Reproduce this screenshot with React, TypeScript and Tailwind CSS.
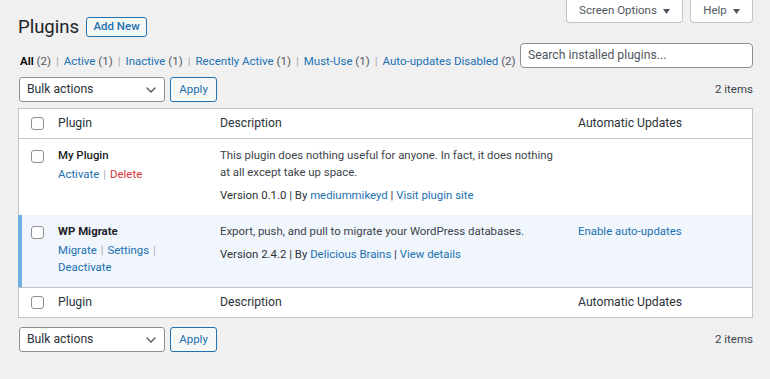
import React from "react";

const Chevron = () => (
  <svg width="10" height="6" viewBox="0 0 10 6" fill="none">
    <path d="M1 1l4 4 4-4" stroke="#50575e" strokeWidth="1.4" strokeLinecap="round" strokeLinejoin="round" />
  </svg>
);

const Tri = () => (
  <svg width="7" height="5" viewBox="0 0 7 5" className="ml-[6px]">
    <path d="M0 0h7L3.5 5z" fill="#50575e" />
  </svg>
);

const Check = () => (
  <span className="block w-[13px] h-[13px] rounded-[3px] border border-[#8c8f94] bg-white" />
);

const Sep = () => <span className="text-[#a7aaad] mx-[4px]">|</span>;
const FSep = () => <span className="text-[#a7aaad] mx-[5px]">|</span>;

function BulkRow() {
  return (
    <div className="flex items-center justify-between h-[25px]">
      <div className="flex items-center gap-[5px]">
        <div className="w-[146px] h-[25px] border border-[#8c8f94] rounded-[3px] bg-white flex items-center justify-between pl-[7px] pr-[8px] text-[12.2px] text-[#2c3338]">
          <span>Bulk actions</span>
          <Chevron />
        </div>
        <div className="w-[47px] h-[25px] border border-[#2271b1] rounded-[3px] bg-[#f6f7f7] flex items-center justify-center text-[11.5px] text-[#2271b1]">
          Apply
        </div>
      </div>
      <span className="text-[11.5px] text-[#3c434a]">2 items</span>
    </div>
  );
}

function HeadRow({ top }: { top?: boolean }) {
  return (
    <div
      className={
        "flex items-center h-[30px] text-[12.2px] text-[#2c3338] " +
        (top ? "border-b border-[#c3c4c7]" : "border-t border-[#c3c4c7]")
      }
    >
      <div className="w-[39px] pl-[12px]">
        <Check />
      </div>
      <div className="w-[162px]">Plugin</div>
      <div className="w-[358px]">Description</div>
      <div className="flex-1">Automatic Updates</div>
    </div>
  );
}

export default function App() {
  return (
    <div
      className="w-[770px] h-[379px] bg-[#f0f0f1] overflow-hidden text-[#3c434a]"
      style={{ fontFamily: "Roboto, Inter, 'Noto Sans', sans-serif" }}
    >
      <div className="flex justify-between items-start pr-[17px]">
        <div className="flex items-center pl-[18px] pt-[17px] gap-[7px]">
          <h1 className="text-[18.5px] leading-[20px] text-[#1d2327]">Plugins</h1>
          <div className="h-[20px] w-[61px] border border-[#2271b1] rounded-[3px] bg-[#f6f7f7] flex items-center justify-center text-[11.5px] font-medium text-[#2271b1]">
            Add New
          </div>
        </div>
        <div className="flex gap-[7px]">
          <div className="w-[117px] h-[23px] bg-white border border-t-0 border-[#c3c4c7] rounded-b-[4px] flex items-center justify-center text-[11.5px] text-[#50575e]">
            Screen Options
            <Tri />
          </div>
          <div className="w-[63px] h-[23px] bg-white border border-t-0 border-[#c3c4c7] rounded-b-[4px] flex items-center justify-center text-[11.5px] text-[#50575e]">
            Help
            <Tri />
          </div>
        </div>
      </div>

      <div className="flex justify-between items-start pl-[20px] pr-[17px] mt-[6px]">
        <div className="pt-[10px] text-[11.5px] leading-[16px] text-[#50575e] whitespace-nowrap">
          <span className="font-semibold text-[#000]">All</span> (2)
          <FSep />
          <span className="text-[#2271b1]">Active</span> (1)
          <FSep />
          <span className="text-[#2271b1]">Inactive</span> (1)
          <FSep />
          <span className="text-[#2271b1]">Recently Active</span> (1)
          <FSep />
          <span className="text-[#2271b1]">Must-Use</span> (1)
          <FSep />
          <span className="text-[#2271b1]">Auto-updates Disabled</span> (2)
        </div>
        <div className="w-[233px] h-[25px] border border-[#8c8f94] rounded-[4px] bg-white flex items-center pl-[7px] text-[12.2px] text-[#50575e] shrink-0">
          Search installed plugins...
        </div>
      </div>

      <div className="pl-[19px] pr-[17px] mt-[8px]">
        <BulkRow />
      </div>

      <div className="ml-[18px] mr-[17px] mt-[6px] border border-[#c3c4c7] bg-white">
        <HeadRow top />
        <div className="flex items-start h-[76px] text-[11.4px]">
          <div className="w-[39px] pl-[12px] pt-[11px]">
            <Check />
          </div>
          <div className="w-[162px] pt-[8px]">
            <div className="leading-[17px] font-medium text-[#1d2327]">My Plugin</div>
            <div className="leading-[17px] pt-[2px]">
              <span className="text-[#2271b1]">Activate</span>
              <Sep />
              <span className="text-[#d63638]">Delete</span>
            </div>
          </div>
          <div className="w-[358px] pt-[8px] pr-[18px]">
            <p className="leading-[17px]">
              This plugin does nothing useful for anyone. In fact, it does nothing at all except take up space.
            </p>
            <p className="leading-[17px] mt-[6px] text-[#2c3338]">
              Version 0.1.0 | By <span className="text-[#2271b1]">mediummikeyd</span> |{" "}
              <span className="text-[#2271b1]">Visit plugin site</span>
            </p>
          </div>
          <div className="flex-1" />
        </div>
        <div className="flex items-start h-[72px] text-[11.4px] bg-[#f0f6fc] border-l-[4px] border-[#72aee6] ml-[-1px]">
          <div className="w-[36px] pl-[9px] pt-[11px]">
            <Check />
          </div>
          <div className="w-[162px] pt-[8px]">
            <div className="leading-[17px] font-bold text-[#1d2327]">WP Migrate</div>
            <div className="leading-[16.5px] pt-[2px]">
              <span className="text-[#2271b1]">Migrate</span>
              <Sep />
              <span className="text-[#2271b1]">Settings</span>
              <Sep />
              <br />
              <span className="text-[#2271b1]">Deactivate</span>
            </div>
          </div>
          <div className="w-[358px] pt-[8px] pr-[18px]">
            <p className="leading-[17px]">Export, push, and pull to migrate your WordPress databases.</p>
            <p className="leading-[17px] mt-[6px] text-[#2c3338]">
              Version 2.4.2 | By <span className="text-[#2271b1]">Delicious Brains</span> |{" "}
              <span className="text-[#2271b1]">View details</span>
            </p>
          </div>
          <div className="flex-1 pt-[8px] leading-[17px] text-[#2271b1]">Enable auto-updates</div>
        </div>
        <HeadRow />
      </div>

      <div className="pl-[19px] pr-[17px] mt-[9px]">
        <BulkRow />
      </div>
    </div>
  );
}
